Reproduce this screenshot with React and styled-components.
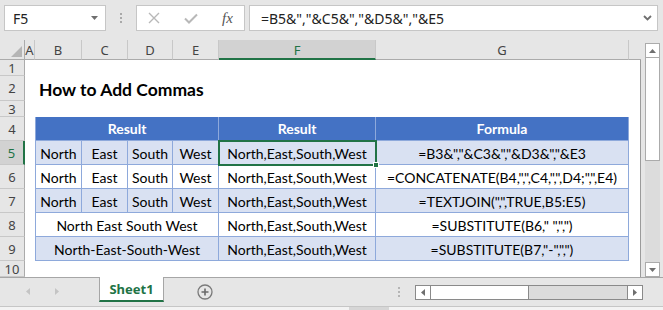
import React from 'react'
import styled, { createGlobalStyle } from 'styled-components'

const GREEN = '#217346'
const BLUE = '#4472c4'
const PALE = '#d9e1f2'
const LINE = '#8ea9db'

const GlobalStyle = createGlobalStyle`
  html, body { margin: 0; padding: 0; background: #e6e6e6; }
  * { box-sizing: border-box; }
`

const colLetters = ['A', 'B', 'C', 'D', 'E', 'F', 'G']

const parts = ['North', 'East', 'South', 'West']

const dataRows = [
    { n: 5, shade: true, selected: true, parts, formula: '=B3&","&C3&","&D3&","&E3' },
    { n: 6, shade: false, parts, formula: '=CONCATENATE(B4,",",C4,",",D4;",",E4)' },
    { n: 7, shade: true, parts, formula: '=TEXTJOIN(",",TRUE,B5:E5)' },
    { n: 8, shade: false, merged: 'North East South West', formula: '=SUBSTITUTE(B6," ",",")' },
    { n: 9, shade: true, merged: 'North-East-South-West', formula: '=SUBSTITUTE(B7,"-",",")' },
]

const Tri = ({ dir = 'down', color = '#6f6f6f', size = 7 }) => {
    const pts = {
        down: '0,0 7,0 3.5,4',
        up: '0,4 7,4 3.5,0',
        left: '4,0 4,7 0,3.5',
        right: '0,0 0,7 4,3.5',
    }[dir]
    const vertical = dir === 'up' || dir === 'down'
    return (
        <svg width={vertical ? size : 4} height={vertical ? 4 : size} viewBox={vertical ? '0 0 7 4' : '0 0 4 7'}>
            <polygon points={pts} fill={color} />
        </svg>
    )
}

const App = () => (
    <>
        <GlobalStyle />
        <Window>
            <FormulaRow>
                <NameBox>
                    <span>F5</span>
                    <Tri dir="down" />
                </NameBox>
                <Grip>
                    <i /><i /><i />
                </Grip>
                <FxGroup>
                    <IconSlot>
                        <svg width="12" height="12" viewBox="0 0 12 12">
                            <path d="M1 1 L11 11 M11 1 L1 11" stroke="#b8b8b8" strokeWidth="1.4" fill="none" />
                        </svg>
                    </IconSlot>
                    <IconSlot>
                        <svg width="14" height="11" viewBox="0 0 14 11">
                            <path d="M1 5.5 L5 9.5 L13 1.5" stroke="#b8b8b8" strokeWidth="2" fill="none" />
                        </svg>
                    </IconSlot>
                    <FxLabel>fx</FxLabel>
                </FxGroup>
                <FormulaInput>
                    <span>{'=B5&","&C5&","&D5&","&E5'}</span>
                    <svg width="9" height="6" viewBox="0 0 9 6">
                        <path d="M1 1 L4.5 4.5 L8 1" stroke="#6f6f6f" strokeWidth="1.8" fill="none" />
                    </svg>
                </FormulaInput>
            </FormulaRow>

            <Workspace>
                <Sheet>
                    <Corner>
                        <svg width="11" height="11" viewBox="0 0 11 11">
                            <polygon points="11,0 11,11 0,11" fill="#b5b5b5" />
                        </svg>
                    </Corner>
                    {colLetters.map(c => (
                        <ColHead key={c} $active={c === 'F'}>{c}</ColHead>
                    ))}
                    <HeadFill />

                    <RowHead>1</RowHead>
                    <Blank $span={8} $edge />

                    <RowHead>2</RowHead>
                    <Blank />
                    <Title>How to Add Commas</Title>
                    <Blank $edge />

                    <RowHead>3</RowHead>
                    <Blank $span={8} $edge />

                    <RowHead>4</RowHead>
                    <Blank />
                    <HeadCell $span={4} $first>Result</HeadCell>
                    <HeadCell>Result</HeadCell>
                    <HeadCell>Formula</HeadCell>
                    <Blank $edge />

                    {dataRows.map(r => (
                        <React.Fragment key={r.n}>
                            <RowHead $active={r.selected}>{r.n}</RowHead>
                            <Blank />
                            {r.merged
                                ? <DataCell $span={4} $first $shade={r.shade}>{r.merged}</DataCell>
                                : r.parts.map((p, i) => (
                                    <DataCell key={p} $first={i === 0} $shade={r.shade}>{p}</DataCell>
                                ))}
                            <DataCell $shade={r.shade} $selected={r.selected}>
                                North,East,South,West
                                {r.selected && <FillHandle />}
                            </DataCell>
                            <DataCell $shade={r.shade}>{r.formula}</DataCell>
                            <Blank $edge />
                        </React.Fragment>
                    ))}

                    <RowHead>10</RowHead>
                    <Blank $span={8} $edge />
                </Sheet>

                <VScroll>
                    <ScrollBtn><Tri dir="up" /></ScrollBtn>
                    <VThumb />
                    <Track />
                    <ScrollBtn><Tri dir="down" /></ScrollBtn>
                </VScroll>
            </Workspace>

            <TabBar>
                <TabNav>
                    <Tri dir="left" color="#c4c4c4" />
                    <Tri dir="right" color="#c4c4c4" />
                </TabNav>
                <SheetTab>Sheet1</SheetTab>
                <AddSheet>
                    <svg width="16" height="16" viewBox="0 0 16 16">
                        <circle cx="8" cy="8" r="7" stroke="#7a7a7a" strokeWidth="1.3" fill="none" />
                        <path d="M8 4.5 V11.5 M4.5 8 H11.5" stroke="#6a6a6a" strokeWidth="1.6" />
                    </svg>
                </AddSheet>
                <SplitGrip>
                    <i /><i /><i />
                </SplitGrip>
                <HScroll>
                    <HBtn><Tri dir="left" /></HBtn>
                    <HThumb />
                    <HTrack />
                    <HBtn><Tri dir="right" /></HBtn>
                </HScroll>
            </TabBar>

            <StatusStrip>
                <StatusSeg />
            </StatusStrip>
        </Window>
    </>
)

const Window = styled.div`
    width: 663px;
    height: 310px;
    display: flex;
    flex-direction: column;
    background: #e6e6e6;
    overflow: hidden;
`

const FormulaRow = styled.div`
    height: 40px;
    flex: none;
    display: flex;
    align-items: flex-start;
    padding: 5px 0 0 4px;
    font-family: 'Noto Sans', 'Open Sans', sans-serif;
    font-size: 14px;
    color: #222;
`

const NameBox = styled.div`
    width: 102px;
    height: 26px;
    background: #fff;
    border: 1px solid #c6c6c6;
    display: flex;
    align-items: center;
    justify-content: space-between;
    padding: 0 7px 0 8px;
`

const Grip = styled.div`
    margin: 8px 0 0 14px;
    width: 2px;
    display: flex;
    flex-direction: column;
    gap: 2px;
    i {
        display: block;
        width: 2px;
        height: 2px;
        background: #a9a9a9;
    }
`

const FxGroup = styled.div`
    margin-left: 14px;
    width: 109px;
    height: 26px;
    background: #fff;
    border: 1px solid #c6c6c6;
    display: flex;
    align-items: center;
    padding-left: 11px;
`

const IconSlot = styled.div`
    width: 36px;
    display: flex;
    align-items: center;
`

const FxLabel = styled.span`
    font-family: 'Liberation Serif', serif;
    font-style: italic;
    font-size: 15px;
    color: #555;
    margin-left: 2px;
`

const FormulaInput = styled.div`
    margin-left: 4px;
    width: 409px;
    height: 26px;
    background: #fff;
    border: 1px solid #c6c6c6;
    display: flex;
    align-items: center;
    justify-content: space-between;
    padding: 0 5px 0 11px;
`

const Workspace = styled.div`
    height: 237px;
    flex: none;
    display: flex;
    align-items: flex-start;
`

const Sheet = styled.div`
    display: grid;
    grid-template-columns: 25px 10px 47px 46px 45px 46px 157px 253px 12px;
    grid-template-rows: 20px 16px 25px 16px repeat(6, 24px) 16px;
    width: 641px;
    font-family: Lato, 'Liberation Sans', sans-serif;
    font-size: 14px;
    color: #000;
`

const Corner = styled.div`
    background: #e6e6e6;
    border-right: 1px solid #ababab;
    border-bottom: 1px solid #ababab;
    display: flex;
    align-items: flex-end;
    justify-content: flex-end;
    padding: 0 2px 2px 0;
`

const ColHead = styled.div`
    background: ${p => p.$active ? '#d2d2d2' : '#e6e6e6'};
    color: ${p => p.$active ? GREEN : '#444'};
    border-right: 1px solid #c8c8c8;
    border-bottom: ${p => p.$active ? `2px solid ${GREEN}` : '1px solid #ababab'};
    display: flex;
    align-items: center;
    justify-content: center;
    font-family: 'Noto Sans', sans-serif;
    font-size: 13px;
    padding-top: ${p => p.$active ? '1px' : '0'};
`

const HeadFill = styled.div`
    background: #e6e6e6;
    border-bottom: 1px solid #ababab;
`

const RowHead = styled.div`
    background: ${p => p.$active ? '#d2d2d2' : '#e6e6e6'};
    color: ${p => p.$active ? GREEN : '#444'};
    border-bottom: 1px solid #c8c8c8;
    border-right: ${p => p.$active ? `2px solid ${GREEN}` : '1px solid #ababab'};
    display: flex;
    align-items: center;
    justify-content: center;
    font-family: 'Noto Sans', sans-serif;
    font-size: 13px;
`

const Blank = styled.div`
    grid-column: span ${p => p.$span || 1};
    background: #fff;
    border-right: ${p => p.$edge ? '1px solid #9b9b9b' : 'none'};
`

const Title = styled.div`
    grid-column: span 6;
    background: #fff;
    display: flex;
    align-items: center;
    padding: 2px 0 0 4px;
    font-size: 17.5px;
    font-weight: 700;
`

const HeadCell = styled.div`
    grid-column: span ${p => p.$span || 1};
    background: ${BLUE};
    color: #fff;
    font-weight: 700;
    display: flex;
    align-items: center;
    justify-content: center;
    border-right: 1px solid ${LINE};
    border-bottom: 1px solid ${LINE};
    border-left: ${p => p.$first ? `1px solid ${LINE}` : 'none'};
`

const DataCell = styled.div`
    grid-column: span ${p => p.$span || 1};
    position: relative;
    background: ${p => p.$shade ? PALE : '#fff'};
    display: flex;
    align-items: center;
    justify-content: center;
    padding-top: 1px;
    white-space: nowrap;
    border-right: 1px solid ${LINE};
    border-bottom: 1px solid ${LINE};
    border-left: ${p => p.$first ? `1px solid ${LINE}` : 'none'};
    outline: ${p => p.$selected ? `2px solid ${GREEN}` : 'none'};
    outline-offset: -1px;
    z-index: ${p => p.$selected ? 1 : 0};
`

const FillHandle = styled.span`
    position: absolute;
    right: -4px;
    bottom: -4px;
    width: 6px;
    height: 6px;
    background: ${GREEN};
    border: 1px solid #fff;
`

const VScroll = styled.div`
    margin: 3px 0 0 4px;
    width: 15px;
    height: 234px;
    display: flex;
    flex-direction: column;
    background: #dcdcdc;
`

const ScrollBtn = styled.div`
    height: 15px;
    flex: none;
    background: #fff;
    border: 1px solid #ababab;
    display: flex;
    align-items: center;
    justify-content: center;
`

const VThumb = styled.div`
    height: 103px;
    flex: none;
    background: #fff;
    border: 1px solid #ababab;
    border-top: none;
`

const Track = styled.div`
    flex: 1;
`

const TabBar = styled.div`
    height: 29px;
    flex: none;
    border-top: 1px solid #a6a6a6;
    display: flex;
    align-items: flex-start;
`

const TabNav = styled.div`
    width: 99px;
    height: 27px;
    display: flex;
    align-items: center;
    gap: 25px;
    padding-left: 26px;
`

const SheetTab = styled.div`
    width: 65px;
    height: 25px;
    background: #fff;
    border-left: 1px solid #a6a6a6;
    border-right: 1px solid #a6a6a6;
    border-bottom: 2px solid ${GREEN};
    margin-top: -1px;
    display: flex;
    align-items: center;
    justify-content: center;
    font-family: 'Noto Sans', sans-serif;
    font-size: 13px;
    font-weight: 700;
    color: ${GREEN};
`

const AddSheet = styled.div`
    margin: 6px 0 0 33px;
    display: flex;
`

const SplitGrip = styled.div`
    margin: 9px 0 0 185px;
    width: 2px;
    display: flex;
    flex-direction: column;
    gap: 2px;
    i {
        display: block;
        width: 2px;
        height: 2px;
        background: #b5b5b5;
    }
`

const HScroll = styled.div`
    margin: 7px 0 0 15px;
    width: 228px;
    height: 15px;
    display: flex;
    background: #dcdcdc;
    border: 1px solid #8a8a8a;
`

const HBtn = styled.div`
    width: 14px;
    flex: none;
    background: #fff;
    display: flex;
    align-items: center;
    justify-content: center;
`

const HThumb = styled.div`
    width: 99px;
    flex: none;
    background: #fff;
    border-left: 1px solid #8a8a8a;
    border-right: 1px solid #8a8a8a;
`

const HTrack = styled.div`
    flex: 1;
    border-right: 1px solid #8a8a8a;
`

const StatusStrip = styled.div`
    flex: 1;
    border-top: 1px solid #c6c6c6;
    background: #f3f3f3;
    padding-left: 349px;
`

const StatusSeg = styled.div`
    width: 40px;
    height: 100%;
    background: #d6d6d6;
`

export default App
